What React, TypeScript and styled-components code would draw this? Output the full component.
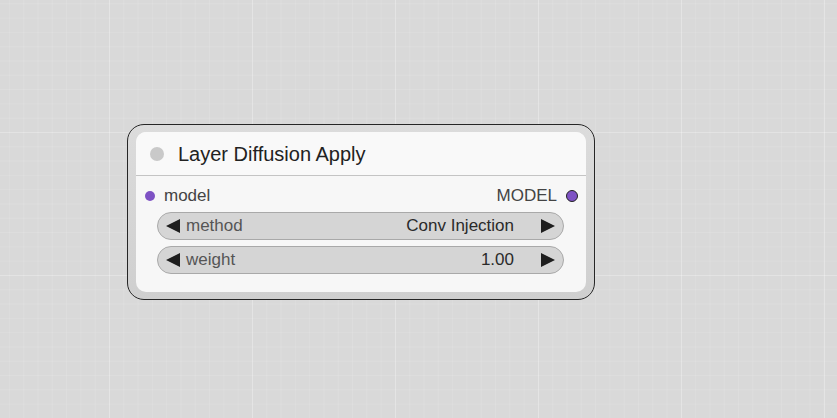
import { createGlobalStyle, styled } from 'styled-components';

const GlobalStyle = createGlobalStyle`
  html, body {
    margin: 0;
    height: 100%;
  }
  body {
    width: 837px;
    height: 418px;
    overflow: hidden;
    font-family: "Liberation Sans", Arial, sans-serif;
    background-color: #d9d9d9;
    background-image:
      linear-gradient(to right, rgba(255, 255, 255, 0.22) 1px, transparent 1px),
      linear-gradient(to bottom, rgba(255, 255, 255, 0.18) 1px, transparent 1px),
      linear-gradient(to right, rgba(255, 255, 255, 0.1) 1px, transparent 1px),
      linear-gradient(to bottom, rgba(255, 255, 255, 0.1) 1px, transparent 1px);
    background-size: 143px 143px, 143px 143px, 14.3px 14.3px, 14.3px 14.3px;
    background-position: 109px 132px, 109px 132px, 109px 132px, 109px 132px;
  }
`;

const Canvas = styled.div`
  position: relative;
  width: 837px;
  height: 418px;
`;

const NodeFrame = styled.div`
  position: absolute;
  left: 127px;
  top: 124px;
  width: 468px;
  height: 176px;
  border: 1px solid #262626;
  border-radius: 17px;
  background: linear-gradient(to bottom, #dcdcdc, #cfcfcf);
  padding: 7px 8px;
  box-sizing: border-box;
  display: flex;
  flex-direction: column;
`;

const Card = styled.div`
  flex: 1;
  background: #f7f7f7;
  border-radius: 10px;
  display: flex;
  flex-direction: column;
  overflow: hidden;
`;

const TitleBar = styled.div`
  height: 44px;
  border-bottom: 1px solid #c4c4c4;
  display: flex;
  align-items: center;
  padding-left: 14px;
  gap: 14px;
  box-sizing: border-box;
  background: #f9f9f9;
`;

const Dot = styled.span<{ $color: string; $size: number; $ring?: boolean }>`
  width: ${(p) => p.$size}px;
  height: ${(p) => p.$size}px;
  border-radius: 50%;
  background: ${(p) => p.$color};
  box-sizing: border-box;
  border: ${(p) => (p.$ring ? '1.5px solid #222' : 'none')};
  flex-shrink: 0;
`;

const Title = styled.span`
  font-size: 20px;
  color: #222;
  padding-top: 1px;
`;

const Body = styled.div`
  display: flex;
  flex-direction: column;
  padding: 6px 0 0 0;
  gap: 6px;
`;

const SlotRow = styled.div`
  display: flex;
  align-items: center;
  justify-content: space-between;
  height: 28px;
  margin-bottom: -4px;
  padding: 0 8px 0 9px;
  font-size: 17px;
  color: #444;
`;

const Slot = styled.div`
  display: flex;
  align-items: center;
  gap: 9px;
`;

const Widget = styled.div`
  margin: 0 22px 0 21px;
  height: 28px;
  border: 1px solid #a9a9a9;
  border-radius: 14px;
  background: #d5d5d5;
  display: flex;
  align-items: center;
  padding: 0 8px 0 8px;
  box-sizing: border-box;
  font-size: 17px;
`;

const Arrow = styled.svg`
  width: 14px;
  height: 14px;
  flex-shrink: 0;
  fill: #1e1e1e;
`;

const Label = styled.span`
  color: #555;
  margin-left: 6px;
  flex: 1;
`;

const Value = styled.span`
  color: #2a2a2a;
  margin-right: 27px;
`;

function LeftArrow() {
  return (
    <Arrow viewBox="0 0 14 14">
      <polygon points="0,7 14,0 14,14" />
    </Arrow>
  );
}

function RightArrow() {
  return (
    <Arrow viewBox="0 0 14 14">
      <polygon points="14,7 0,0 0,14" />
    </Arrow>
  );
}

function Node() {
  return (
    <NodeFrame>
      <Card>
        <TitleBar>
          <Dot $color="#c9c9c9" $size={14} />
          <Title>Layer Diffusion Apply</Title>
        </TitleBar>
        <Body>
          <SlotRow>
            <Slot>
              <Dot $color="#7e52c4" $size={10} />
              <span>model</span>
            </Slot>
            <Slot>
              <span>MODEL</span>
              <Dot $color="#7e52c4" $size={12} $ring />
            </Slot>
          </SlotRow>
          <Widget>
            <LeftArrow />
            <Label>method</Label>
            <Value>Conv Injection</Value>
            <RightArrow />
          </Widget>
          <Widget>
            <LeftArrow />
            <Label>weight</Label>
            <Value>1.00</Value>
            <RightArrow />
          </Widget>
        </Body>
      </Card>
    </NodeFrame>
  );
}

export default function App() {
  return (
    <>
      <GlobalStyle />
      <Canvas>
        <Node />
      </Canvas>
    </>
  );
}
